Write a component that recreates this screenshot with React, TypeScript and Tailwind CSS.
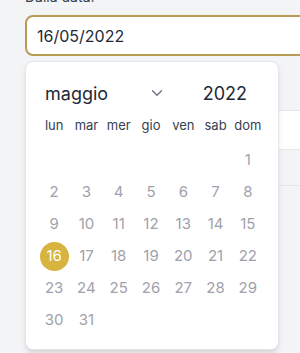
import React from 'react';
import { ChevronDown } from 'lucide-react';

const weekdays = ['lun', 'mar', 'mer', 'gio', 'ven', 'sab', 'dom'];

// maggio 2022 starts on a Sunday
const cells: (number | null)[] = [
  null, null, null, null, null, null,
  ...Array.from({ length: 31 }, (_, i) => i + 1),
];

export default function App() {
  const selected = 16;

  return (
    <div className="relative h-[353px] w-[300px] overflow-hidden bg-[#f3f4f6] font-['Inter',sans-serif]">
      <div className="pl-[25px]">
        <label className="-mt-[13px] block text-sm leading-5 text-[#374151]">Dalla data:</label>
        <div className="mt-[8px] flex h-[41px] w-[300px] items-center rounded-lg border-2 border-[#b89b55] bg-white pl-[10px] text-[16px] text-[#1f2937]">
          16/05/2022
        </div>
        <div className="mt-[54px] h-[40px] w-[300px] border-y border-[#e5e7eb] bg-white" />
        <div className="mt-[35px] h-[200px] w-[300px] border-t border-[#e5e7eb] bg-[#f4f4f6]" />
      </div>

      <div className="absolute left-[25px] top-[61px] h-[289px] w-[254px] rounded-lg border border-[#e5e7eb] bg-white pt-[15px] shadow-md">
        <div className="flex h-[32px] items-center pl-[19px] pr-[31px] text-[18px] text-[#1f2937]">
          <span>maggio</span>
          <ChevronDown size={18} strokeWidth={1.75} className="ml-[40px] text-[#6b7280]" />
          <span className="ml-auto">2022</span>
        </div>
        <div className="mt-[1px] ml-[12px] grid w-[226px] grid-cols-7">
          {weekdays.map(d => (
            <div key={d} className="flex h-8 items-center justify-center text-[13px] text-[#374151]">{d}</div>
          ))}
        </div>
        <div className="mt-[2px] ml-[12px] grid w-[226px] grid-cols-7">
          {cells.map((n, i) => (
            <div key={i} className="flex h-8 items-center justify-center text-[15px] text-[#a1a1aa]">
              {n === selected ? (
                <span className="flex h-[29px] w-[29px] items-center justify-center rounded-full bg-[#d6b43f] text-white">{n}</span>
              ) : n}
            </div>
          ))}
        </div>
      </div>
    </div>
  );
}
